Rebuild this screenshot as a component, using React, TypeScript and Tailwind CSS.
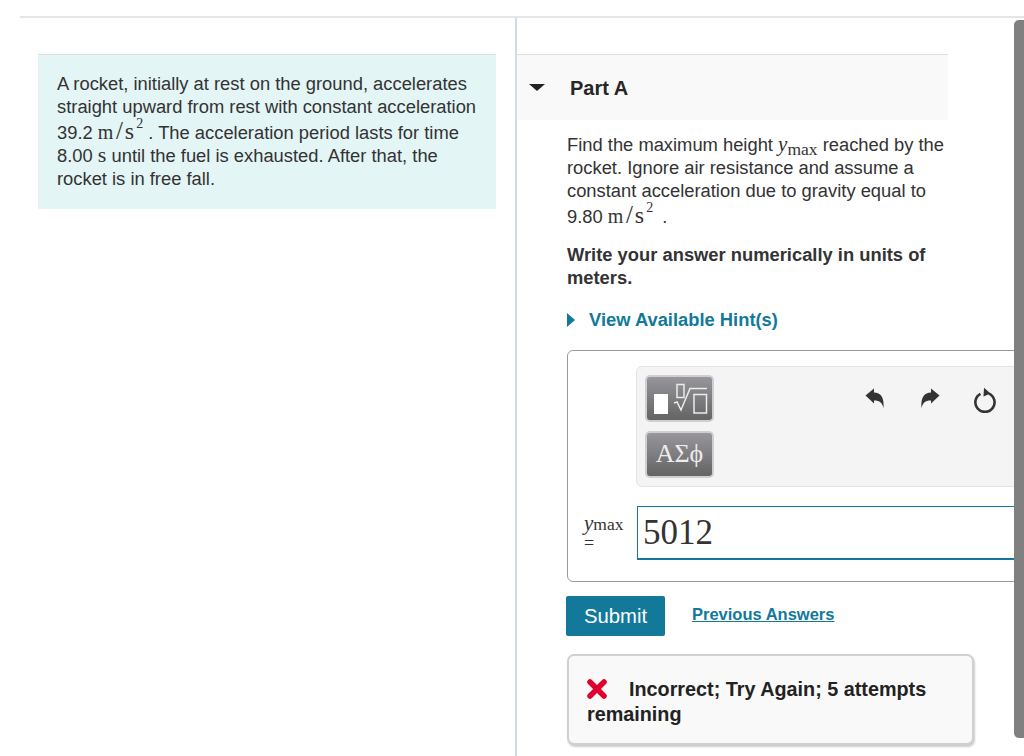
import React from 'react';

const serif = "font-['Liberation_Serif',serif]";

function Units() {
  return (
    <span className={`${serif} text-[20px] leading-none`}>
      <span className="tracking-[0.5px]">m</span>
      <span className="mx-[2px] text-[25px] font-light leading-none">/</span>
      <span className="text-[24px] leading-none">s</span>
      <sup className="relative -top-[3px] ml-[2px] align-super text-[14px] leading-none">2</sup>
    </span>
  );
}

function UndoIcon({ flip }: { flip?: boolean }) {
  return (
    <svg width="20" height="24" viewBox="0 0 20 24" className={flip ? '-scale-x-100' : ''}>
      <path d="M0.5 8.5 L9 1.5 V5.5 C15.5 5.5 19.5 10 18.5 21.5 C17.5 16 15 13.5 9 13.5 V16.5 Z" fill="#333" />
    </svg>
  );
}

function ResetIcon() {
  return (
    <svg width="26" height="26" viewBox="0 0 26 26">
      <path d="M8.5 6.8 A9.6 9.6 0 1 0 17 6.6" fill="none" stroke="#333" strokeWidth="2.6" />
      <path d="M12 0.8 L18.5 6.5 L11.5 9.5 Z" fill="#333" />
    </svg>
  );
}

function TemplateIcon() {
  return (
    <svg width="56" height="32" viewBox="-1 0 56 32">
      <rect x="1" y="11" width="14" height="20" fill="#fff" />
      <rect x="24" y="1.5" width="7" height="13" fill="none" stroke="#ececec" strokeWidth="1.5" />
      <path d="M21 20 L24 19 L28 27 L37 5.5 H54" fill="none" stroke="#ececec" strokeWidth="1.5" />
      <rect x="41" y="11.5" width="12.5" height="18.5" fill="none" stroke="#ececec" strokeWidth="1.5" />
    </svg>
  );
}

export default function App() {
  return (
    <div className="relative h-[756px] w-[1024px] overflow-hidden bg-white pl-5 pt-4 font-['Liberation_Sans',sans-serif] text-[#333]">
      <div className="flex h-full border-t-2 border-[#e5e5e5]">
        {/* problem intro */}
        <div className="w-[495px] shrink-0 pl-[18px] pt-[36px]">
          <div className="h-[155px] w-[458px] border-t border-[#d9dfe0] bg-[#e4f5f6] px-[19px] pt-[17px] text-[18.35px] leading-[23px]">
            A rocket, initially at rest on the ground, accelerates
            <br />
            straight upward from rest with constant acceleration
            <br />
            39.2 <Units /> . The acceleration period lasts for time
            <br />
            8.00 <span className={`${serif} text-[22px] leading-none`}>s</span> until the fuel is exhausted. After that, the
            <br />
            rocket is in free fall.
          </div>
        </div>

        {/* part A */}
        <div className="w-[600px] shrink-0 border-l-2 border-[#cddcea] pt-[36px]">
          <div className="flex h-[66px] w-[431px] items-center border-t border-[#e0e0e0] bg-[#f9f9f9]">
            <div className="ml-[12px] h-0 w-0 border-x-[8px] border-t-[7px] border-x-transparent border-t-[#222]" />
            <div className="ml-[25px] text-[20px] font-bold text-[#272727]">Part A</div>
          </div>

          <div className="pl-[50px]">
            <div className="mt-[13px] w-[390px] text-[18.35px] leading-[23px]">
              Find the maximum height{' '}
              <span className={`${serif} text-[21px] italic leading-none`}>y</span>
              <span className={`${serif} relative top-[4px] text-[17.5px] leading-none`}>max</span> reached by the
              <br />
              rocket. Ignore air resistance and assume a
              <br />
              constant acceleration due to gravity equal to
              <br />
              9.80 <Units /> <span className="ml-[4px]">.</span>
            </div>
            <div className="mt-[15px] text-[18.35px] font-bold leading-[23px]">
              Write your answer numerically in units of
              <br />
              meters.
            </div>
            <div className="mt-[19px] flex h-[24px] items-center text-[18.35px] font-bold text-[#12799a]">
              <div className="h-0 w-0 border-y-[7px] border-l-[8px] border-y-transparent border-l-[#12799a]" />
              <span className="ml-[14px]">View Available Hint(s)</span>
            </div>

            {/* answer box */}
            <div className="mt-[18px] h-[232px] w-[520px] rounded-[6px] border border-[#9a9a9a] pl-[68px] pt-[15px]">
              <div className="flex h-[121px] w-[450px] rounded-[6px] border border-[#e3e3e3] bg-[#f4f4f4] pl-[8px] pt-[8px]">
                <div className="flex flex-col gap-[9px]">
                  <div className="flex h-[47px] w-[69px] items-center justify-center rounded-[5px] border-2 border-[#cfcfcf] bg-gradient-to-b from-[#98969c] to-[#646464]">
                    <TemplateIcon />
                  </div>
                  <div className={`${serif} flex h-[47px] w-[69px] items-center justify-center rounded-[5px] border-2 border-[#cfcfcf] bg-gradient-to-b from-[#98969c] to-[#646464] pb-[3px] text-[26px] text-[#ececec]`}>
                    ΑΣϕ
                  </div>
                </div>
                <div className="ml-[151px] mt-[12px] flex h-[26px] items-start">
                  <UndoIcon />
                  <div className="ml-[35px]">
                    <UndoIcon flip />
                  </div>
                  <div className="ml-[32px]">
                    <ResetIcon />
                  </div>
                </div>
              </div>

              <div className="mt-[19px] flex">
                <div className={`${serif} -ml-[52px] w-[53px] pt-[5px] text-[#333]`}>
                  <div className="text-[21px] leading-[24px]">
                    <span className="italic">y</span>
                    <span className="text-[17.5px]">max</span>
                  </div>
                  <div className="text-[18px] leading-[15px]">=</div>
                </div>
                <div className={`${serif} flex h-[54px] w-[450px] items-center border border-b-2 border-[#12799a] pl-[5px] pt-[2px] text-[35px] text-[#333]`}>
                  5012
                </div>
              </div>
            </div>

            <div className="-ml-[1px] mt-[14px] flex items-start">
              <div className="flex h-[40px] w-[99px] items-center justify-center rounded-[2px] bg-[#12799a] text-[20.3px] text-white">
                Submit
              </div>
              <div className="ml-[27px] mt-[8px] text-[16.5px] font-bold leading-[20px] text-[#12799a] underline">
                Previous Answers
              </div>
            </div>

            {/* feedback */}
            <div className="mt-[18px] h-[91px] w-[407px] rounded-[7px] border-2 border-[#d0d0d0] bg-[#f9f9f9] pl-[18px] pt-[21px] text-[19.8px] font-bold leading-[25px] text-[#222] shadow-[1px_2px_2px_rgba(0,0,0,0.2)]">
              <svg width="20" height="20" viewBox="0 0 20 20" className="mr-[22px] inline-block align-[-3px]">
                <path d="M3 3 L17 17 M17 3 L3 17" stroke="#e1002d" strokeWidth="5.5" strokeLinecap="round" />
              </svg>
              Incorrect; Try Again; 5 attempts
              <br />
              remaining
            </div>
          </div>
        </div>
      </div>

      {/* scrollbar thumb */}
      <div className="absolute right-0 top-[20px] h-[718px] w-[10px] rounded-l-[5px] bg-[#808080]" />
    </div>
  );
}
